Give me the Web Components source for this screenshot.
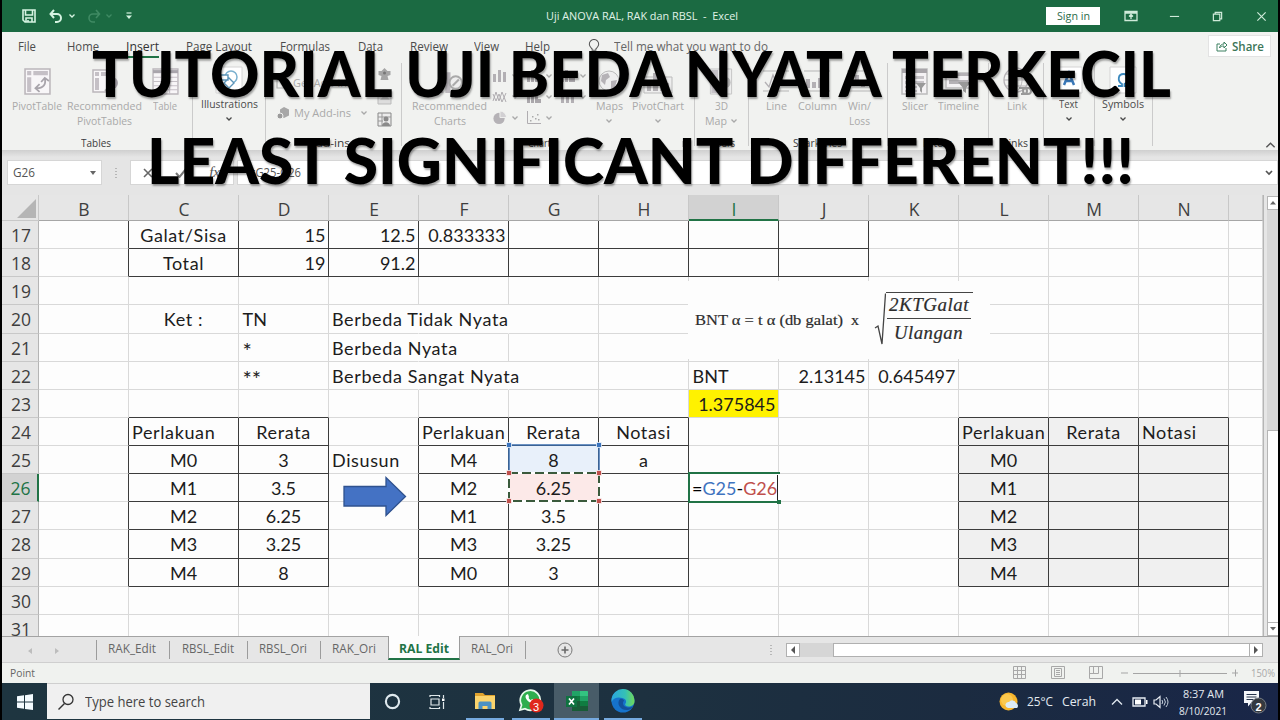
<!DOCTYPE html>
<html lang="id">
<head>
<meta charset="utf-8">
<title>Uji ANOVA RAL, RAK dan RBSL - Excel</title>
<style>
    body{
        margin: 0;
        background: #000;
        font-family: "Open Sans", "Noto Sans", sans-serif;
        overflow: hidden;
    }
</style>
</head>
<body>
<excel-app></excel-app>

<script>
"use strict"

// text squeezed or stretched to the width given in "w"
class FitText extends HTMLElement{
    constructor(){
        super();
        this.attachShadow({mode: "open"});
    }

    connectedCallback(){
        this.shadowRoot.innerHTML = `
        <style>
        :host{ display: inline-block; white-space: nowrap; flex: none; text-align: left; }
        span{ display: inline-block; transform-origin: 0 50%; }
        </style>
        <span><slot></slot></span>`;
        const width = Number(this.getAttribute('w'));
        const span = this.shadowRoot.querySelector('span');
        const real = span.getBoundingClientRect().width;
        this.style.width = width + 'px';
        if(real) span.style.transform = `scaleX(${width / real})`;
    }
}
customElements.define('fit-text', FitText);

const ICONS = {
    save: ['0 0 14 14', `<path d="M1 1h12v12H3l-2-2z M3.5 1v5h7V1 M4 13V9h6v4 M6 11v2" fill="none" stroke="#d5f3e1" stroke-width="1.6"/>`],
    undo: ['0 0 14 14', `<path d="M5 1L1.500 5l3.500 4M2 5h6a4 4 0 0 1 0 8H6" fill="none" stroke="#d5f3e1" stroke-width="2"/>`],
    redo: ['0 0 14 14', `<path d="M9 1l3.500 4L9 9M12 5H6a4 4 0 0 0 0 8h2" fill="none" stroke="#3f8a63" stroke-width="1.600"/>`],
    chev: ['0 0 8 6', `<path d="M1.500 1.500L4 4l2.500-2.500" fill="none" stroke="currentColor" stroke-width="1.300"/>`],
    qat: ['0 0 8 8', `<path d="M1.500 1h5" stroke="#d5f3e1" stroke-width="1.200"/><path d="M1 3.500h6L4 7z" fill="#d5f3e1"/>`],
    ribbonopt: ['0 0 14 12', `<path d="M1 1.500h12v9H1z M1 3h12 M7 9V5 M5 6.500l2-2 2 2" fill="none" stroke="#cfead9" stroke-width="1.300"/>`],
    min: ['0 0 12 12', `<path d="M1 6.500h10" stroke="#cfead9" stroke-width="1.200"/>`],
    restore: ['0 0 12 12', `<path d="M3.500 3.500V1.500h7v7h-2M1.500 3.500h7v7h-7z" fill="none" stroke="#cfead9" stroke-width="1.300"/>`],
    close: ['0 0 12 12', `<path d="M1.500 1.500l9 9M10.500 1.500l-9 9" stroke="#cfead9" stroke-width="1.300"/>`],
    bulb: ['0 0 12 16', `<path d="M4 12V10.500C2.500 9 1 8 1 5.500a5 5 0 0 1 10 0C11 8 9.500 9 8 10.500V12zM4.500 14.500h3" fill="none" stroke="#555" stroke-width="1.100"/>`],
    share: ['0 0 12 12', `<path d="M4 4H1v7h9V8M3.500 8C4 5 6 4 8 4V2l3 3-3 3V6C6 6 4.500 6.500 3.500 8z" fill="none" stroke="#3c8060"/>`],
    pivot: ['0 0 26 26', `<path d="M1 1h24v24H1z" fill="#f8f6f8" stroke="#bbb6bb" stroke-width="1.500"/><path d="M3 3h4v4H3zM9 3h14v4H9zM3 9h4v14H3z" fill="#c5c0c6"/><path d="M20 10c1.500 6-1.500 9.500-8 9.500M16.500 13.500L20 9.500l4 3M15 15.500l-4 4 4 3.500" fill="none" stroke="#a8a4ab" stroke-width="1.700"/>`],
    recpivot: ['0 0 26 26', `<path d="M1 2h20v22H1z" fill="#f8f6f8" stroke="#bbb6bb" stroke-width="1.500"/><path d="M3 4h4v4H3zM9 4h10v4H9zM3 10h4v12H3z" fill="#c5c0c6"/><circle cx="20" cy="15" r="6" fill="#aaa6ad"/><path d="M13 23l4-4" stroke="#aaa" stroke-width="2"/>`],
    table: ['0 0 26 26', `<path d="M1 1h24v24H1z" fill="#f8f6f8" stroke="#bbb6bb" stroke-width="1.300"/><path d="M1 2h24v3H1z" fill="#a9a5ac"/><path d="M1 9h24M1 13h24M1 17h24M1 21h24M9 5v20M17 5v20" stroke="#c5c0c6"/>`],
    illus: ['0 0 28 28', `<path d="M1 1h26v26H1z" fill="#fff" stroke="#d4d4d4"/><circle cx="16" cy="11" r="6" fill="none" stroke="#7ab0cf" stroke-width="1.500"/><path d="M5 9h8v5H5zM14 12l5 5-5 5-5-5z" fill="#fff" stroke="#5b94b8" stroke-width="1.400"/>`],
    getadd: ['0 0 13 13', `<path d="M1 4h11v8H1zM3 4l1-3h5l1 3" fill="none" stroke="#b2b2b2" stroke-width="1.200"/>`],
    myadd: ['0 0 14 14', `<path d="M8 1l5 2.500v6L8 12 4 9.500v-6z" fill="#a7a7a7"/><circle cx="4" cy="10" r="3" fill="#9b9b9b" stroke="#f1f2f0"/>`],
    people: ['0 0 15 15', `<path d="M7.500 1l3 3h3v4l-3 1 1 4h-8l1-4-3-1V4h3z" fill="#a5a5a5"/><circle cx="7.500" cy="6" r="1.500" fill="#777"/>`],
    visio: ['0 0 15 15', `<path d="M1 1h13v13H1z" fill="#ddd" stroke="#bbb"/><path d="M3 10l5-6 5 6z" fill="#bbb"/>`],
    bing: ['0 0 15 15', `<path d="M1 1h13v13H1z" fill="#ececec" stroke="#888"/><path d="M1 5h13M5 1v13M1 9h5" stroke="#999"/><circle cx="9" cy="7" r="2.500" fill="#8a8a8a"/><path d="M5 14c0-5 8-5 8 0z" fill="#8a8a8a"/>`],
    recchart: ['0 0 26 26', `<path d="M2 11h5v13H2zM9 4h5v20H9z" fill="#bdb9be"/><circle cx="19" cy="14" r="6" fill="#eee" stroke="#aaa" stroke-width="2"/><path d="M16 17l6-6" stroke="#aaa" stroke-width="2"/>`],
    bars: ['0 0 15 14', `<path d="M1 5h3v8H1zM6 1h3v12H6zM11 3h3v10h-3z" fill="#b3b0b4"/>`],
    linech: ['0 0 15 14', `<path d="M1 11l3-9 3 9 3-9 4 10M1 4l3 7 3-7 3 8 4-9" fill="none" stroke="#b0adb1"/>`],
    pie: ['0 0 15 15', `<circle cx="7" cy="8" r="6" fill="#b5b2b6"/><path d="M8 7V0a7 7 0 0 1 7 7z" fill="#d2d0d3" stroke="#f1f2f0"/>`],
    hist: ['0 0 15 14', `<path d="M1 13V4h3v9zM5 13V1h3v12zM9 13V6h3v7zM12 13V9h3v4z" fill="#aaa7ab"/>`],
    scatter: ['0 0 15 14', `<path d="M1.500 0v12.500H15" fill="none" stroke="#b0adb1"/><path d="M4 9h1.500v1.500H4zM6 5h1.500v1.500H6zM9 7h1.500v1.500H9zM11 3h1.500v1.500H11zM12 8h1.500v1.500H12z" fill="#aaa"/>`],
    maps: ['0 0 22 24', `<circle cx="11" cy="12" r="10" fill="#eee" stroke="#bbb"/><path d="M4 6l6-2 2 4-4 3-1 5-4-4zM13 12l6-1-2 7-4 2z" fill="#b5b2b6"/>`],
    pivotch: ['0 0 30 26', `<path d="M1 9h28v16H1z" fill="#eee" stroke="#bbb"/><path d="M4 14h4v9H4zM10 5h5v18h-5zM17 11h4v12h-4zM23 15h3v8h-3z" fill="#b3b0b4"/>`],
    map3d: ['0 0 24 28', `<path d="M1 1h22v26H1z" fill="#eee" stroke="#c5c5c5"/><path d="M2 2h7v24H2z" fill="#c6c3c8"/><circle cx="16" cy="15" r="6" fill="#bbb"/>`],
    spline: ['0 0 26 22', `<path d="M0 1h26M0 21h26" stroke="#b5b5b5"/><path d="M2 12l4 5 4-12 4 10 4-7 5 6" fill="none" stroke="#b3b0b4" stroke-width="1.300"/>`],
    scol: ['0 0 26 22', `<path d="M0 1h26M0 21h26" stroke="#b5b5b5"/><path d="M2 9h4v9H2zM8 12h4v6H8zM14 8h4v10h-4zM20 5h4v13h-4z" fill="#b3b0b4"/>`],
    swin: ['0 0 26 22', `<path d="M0 1h26M0 21h26" stroke="#b5b5b5"/><path d="M2 5h4v6H2zM8 5h4v6H8zM14 11h4v6h-4zM20 5h4v6h-4z" fill="#b3b0b4"/>`],
    slicer: ['0 0 27 27', `<path d="M1 1h25v25H1z" fill="#f4f2f4" stroke="#bbb" stroke-width="1.500"/><path d="M1 1h25v4H1z" fill="#a8a5a9"/><path d="M4 8h19v3H4zM4 13h19v3H4zM4 18h12v2H4zM4 22h12v2H4z" fill="#c5c2c6"/><path d="M15 15h10l-4 5v5l-2-2v-3z" fill="#999"/>`],
    timeline: ['0 0 27 27', `<path d="M1 5h25v15H1z" fill="#f4f2f4" stroke="#bbb" stroke-width="1.500"/><path d="M1 5h25v3H1zM4 12h19v4H4z" fill="#b5b2b6"/><path d="M13 14h13l-5 6v5l-3-2v-3z" fill="#999"/>`],
    link: ['0 0 30 28', `<circle cx="14" cy="13" r="12" fill="none" stroke="#b5b2b6" stroke-width="1.300"/><path d="M14 1v24M2 13h24M4 7h20M4 19h20M14 1c-8 6-8 18 0 24M14 1c8 6 8 18 0 24" fill="none" stroke="#b5b2b6"/><path d="M17 21h5a3 3 0 0 1 0 6h-3M27 27h-3a3 3 0 0 1 0-6h2a3 3 0 0 1 0 6" fill="none" stroke="#999" stroke-width="2"/>`],
    text: ['0 0 28 28', `<path d="M1 1h26v26H1z" fill="#fff" stroke="#d4d4d4"/><path d="M9 19l5-12 5 12M11 15h6" fill="none" stroke="#3a78b8" stroke-width="2.500"/>`],
    omega: ['0 0 28 28', `<path d="M1 1h26v26H1z" fill="#fff" stroke="#d4d4d4"/><path d="M9 20h4v-2c-5-3-4-10 1.500-10s6 7 1 10v2h4" fill="none" stroke="#3a88bd" stroke-width="1.800"/>`],
    launch: ['0 0 8 8', `<path d="M1 7V1h6M3 3l4 4M7 4v3H4" fill="none" stroke="#999"/>`],
    up: ['0 0 12 8', `<path d="M1.500 6.500L6 2l4.500 4.500" fill="none" stroke="#555" stroke-width="1.500"/>`],
    down: ['0 0 10 8', `<path d="M2 2l3 3 3-3" fill="none" stroke="#555" stroke-width="1.700"/>`],
    dots: ['0 0 4 12', `<path d="M1.500 1h1v1h-1zM1.500 4h1v1h-1zM1.500 7h1v1h-1zM1.500 10h1v1h-1z" fill="#888"/>`],
    cancel: ['0 0 10 10', `<path d="M1 1l8 8M9 1L1 9" stroke="#666" stroke-width="1.600"/>`],
    check: ['0 0 12 10', `<path d="M1 5l3.500 4L11 1" fill="none" stroke="#777" stroke-width="2"/>`],
    addsheet: ['0 0 16 16', `<circle cx="8" cy="8" r="7" fill="none" stroke="#7a7a7a"/><path d="M8 4.500v7M4.500 8h7" stroke="#6a6a6a" stroke-width="1.600"/>`],
    normal: ['0 0 13 13', `<path d="M.5.500h12v12H.5zM4.500.500v12M8.500.500v12M.5 4.500h12M.5 8.500h12" fill="none" stroke="#a8a8a8"/>`],
    page: ['0 0 14 13', `<path d="M.5.500h13v12H.5zM3.500 2.500h7v8h-7zM5 4.500h4M5 6.500h4M5 8.500h4" fill="none" stroke="#a8a8a8"/>`],
    brk: ['0 0 14 13', `<path d="M.5.500h13v12H.5zM4.500.500v7M9.500.500v7M.5 7.500h9" fill="none" stroke="#a8a8a8"/>`],
    win: ['0 0 16 16', `<path d="M0 2.300L7 1.300v6.300H0zM8 1.200L16 0v7.600H8zM0 8.500h7v6.300l-7-1zM8 8.500h8V16l-8-1.100z" fill="#f4fbff"/>`],
    search: ['0 0 18 18', `<circle cx="11" cy="6.500" r="5" fill="none" stroke="#333" stroke-width="1.300"/><path d="M7.500 10.500L1.500 16.500" stroke="#333" stroke-width="1.500"/>`],
    cortana: ['0 0 16 16', `<circle cx="8" cy="8" r="6.200" fill="none" stroke="#dfe9ee" stroke-width="2"/>`],
    taskview: ['0 0 16 16', `<path d="M1 1.500h9.500M1 14.500h9.500M2 5h8v6H2zM1 1v2M10.500 1v2M1 13v2M10.500 13v2M14.500 1v3M14.500 8v7" fill="none" stroke="#dfe7ea" stroke-width="1.200"/><path d="M13 4.500h2.500v2.500H13z" fill="#fff"/>`],
    folder: ['0 0 22 18', `<path d="M1 1h8l2 2h10v4H1z" fill="#e0a32e"/><path d="M1 4h20v13H1z" fill="#fbd46c"/><path d="M4.500 17v-6q0-1.500 1.500-1.500h10q1.500 0 1.500 1.500v6h-4v-3h-5v3z" fill="#4a91c4"/>`],
    whats: ['0 0 26 24', `<path d="M2 21l1.500-5A10 10 0 1 1 7 19.700z" fill="#2fae4e" stroke="#eafaee" stroke-width="1.700"/><path d="M8 6c-2 3 3 9 8 8l1-2-3-2-1 1c-1 0-3-2-2-3L10 5z" fill="#fff"/><circle cx="18.500" cy="16.500" r="7" fill="#e0281c"/>`],
    excel: ['0 0 22 20', `<path d="M6 0h15q1 0 1 1v18q0 1-1 1H6z" fill="#21a366"/><path d="M6 5h8v5H6z" fill="#107c41"/><path d="M14 0h7q1 0 1 1v4h-8z" fill="#33c481"/><path d="M6 10h8v5H6zM14 10h8v5h-8zM6 15h16v5H6z" fill="#185c37"/><path d="M14 10h8v5h-8z" fill="#107c41"/><path d="M0 5h11v11H0z" fill="#0f7240"/><path d="M3 7.500l5 6M8 7.500l-5 6" stroke="#fff" stroke-width="1.700"/>`],
    edge: ['0 0 24 24', `<defs><linearGradient id="a" x1="0" x2="1"><stop offset="0" stop-color="#2aa6e0"/><stop offset=".6" stop-color="#35c1b5"/><stop offset="1" stop-color="#72d957"/></linearGradient></defs><circle cx="12" cy="12" r="11.500" fill="#1673cc"/><path d="M.5 11A11.500 11.500 0 0 1 23.500 12c0 4-3 5.500-6 5.500s-4-1.500-3-3 1-4.500-3-5.500S3 8 .5 13z" fill="url(#a)"/><path d="M9 10c-4 4 0 12 8 11 2-.5 4-2 5-3.500-4 2-10 1-10-3.500 0-1.500 1-2 1-2.500S11 9 9 10z" fill="#12509c"/>`],
    weather: ['0 0 20 20', `<circle cx="9.500" cy="9.500" r="9" fill="#f8b62d"/><circle cx="8" cy="8" r="6" fill="#fcc94e"/><path d="M9 16a3 3 0 0 1 1-6 4 4 0 0 1 7 1 3 3 0 0 1 1 5z" fill="#dcebf6"/>`],
    tray: ['0 0 12 8', `<path d="M1 6.500L6 1.500l5 5" fill="none" stroke="#dfe6ee" stroke-width="1.400"/>`],
    battery: ['0 0 16 10', `<path d="M1 1h12v8H1z" fill="none" stroke="#e6ebf2" stroke-width="1.300"/><path d="M3 2.500h6v5H3zM14 3h1.500v4H14z" fill="#fff"/>`],
    sound: ['0 0 16 14', `<path d="M1 5h2l4-3.500v11L3 9H1z" fill="none" stroke="#e6ebf2" stroke-width="1.200"/><path d="M9 5q1.500 2 0 4M11 3.500q2.800 3.500 0 7M13 2q4 5 0 10" fill="none" stroke="#c5cfdb"/>`],
    notif: ['0 0 24 24', `<path d="M1 1h15v12H8l-3 3.500V13H1z" fill="#f5f7fa"/><path d="M3.500 4.500h10M3.500 7h10M3.500 9.500h7" stroke="#26344c"/><circle cx="15.500" cy="15.500" r="7.500" fill="#34393f" stroke="#777d86"/>`]
};

function icon(name, w, h, style = ''){
    const [box, body] = ICONS[name];
    return `<svg class="i" viewBox="${box}" width="${w}" height="${h}" style="${style}">${body}</svg>`;
}

function fit(text, w, cls = ''){
    return `<fit-text w="${w}" class="${cls}">${text}</fit-text>`;
}

class TitleBar extends HTMLElement{
    constructor(){
        super();
        this.attachShadow({mode: "open"});
    }

    connectedCallback(){
        this.shadowRoot.innerHTML = `${this.render()} ${this.styles()}`
    }

    render(){
        return `
        <div class="quick">
            ${icon('save', 14, 14)}
            ${icon('undo', 14, 14, 'margin-left:13px')}
            ${icon('chev', 8, 6, 'margin-left:5px;color:#d5f3e1')}
            ${icon('redo', 14, 14, 'margin-left:11px')}
            ${icon('chev', 8, 6, 'margin-left:4px;color:#3f8a63')}
            ${icon('qat', 8, 8, 'margin-left:12px')}
        </div>
        <div class="name">${fit('Uji ANOVA RAL, RAK dan RBSL &nbsp;-&nbsp; Excel', 192)}</div>
        <div class="sign">${fit('Sign in', 33)}</div>
        ${icon('ribbonopt', 14, 12, 'margin-left:24px')}
        ${icon('min', 11, 12, 'margin-left:31px')}
        ${icon('restore', 11, 11, 'margin-left:32px')}
        ${icon('close', 11, 11, 'margin-left:33px')}
        `
    }

    styles(){
        return `
        <style>
        :host{
            display: flex;
            align-items: center;
            height: 32px;
            background: #1b6a42;
            color: #e0f3e8;
            font-size: 11px;
        }
        .i{ flex: none; }
        .quick{ display: flex; align-items: center; width: 524px; padding-left: 20px; }
        .name{ width: 500px; margin-top: -2px; }
        .sign{
            width: 54px;
            height: 18px;
            line-height: 18px;
            text-align: center;
            background: #fff;
            color: #2c6b4a;
        }
        </style>
        `
    }
}
customElements.define('title-bar', TitleBar);

class RibbonTabs extends HTMLElement{
    constructor(){
        super();
        this.attachShadow({mode: "open"});
    }

    connectedCallback(){
        this.shadowRoot.innerHTML = `${this.render()} ${this.styles()}`
    }

    render(){
        // text, gap before, width
        const tabs = [
            ['File', 16, 18], ['Home', 31, 32], ['Insert', 27, 33], ['Page Layout', 27, 66],
            ['Formulas', 28, 50], ['Data', 28, 25], ['Review', 27, 38], ['View', 26, 25], ['Help', 26, 25]
        ];
        return `
        ${tabs.map(([t, gap, w]) => `<div class="tab ${t === 'Insert' ? 'on' : ''}" style="margin-left:${gap}px">${fit(t, w)}</div>`).join('')}
        ${icon('bulb', 12, 15, 'margin:7px 0 0 38px')}
        <div class="tab tell">${fit('Tell me what you want to do', 154)}</div>
        <div class="share">${icon('share', 12, 12)}${fit('Share', 32)}</div>
        `
    }

    styles(){
        return `
        <style>
        :host{
            display: flex;
            height: 30px;
            font-size: 12px;
            color: #4c4c4c;
        }
        .tab{ height: 24px; line-height: 30px; }
        .tab.on{ border-bottom: 2px solid #217346; color: #333; }
        .tell{ margin-left: 14px; color: #666; }
        .share{
            display: flex;
            align-items: center;
            justify-content: center;
            gap: 4px;
            width: 61px;
            height: 20px;
            margin: 3px 7px 0 auto;
            background: #fff;
            border: 1px solid #e3e3e3;
            color: #3c7558;
            font-weight: 600;
        }
        </style>
        `
    }
}
customElements.define('ribbon-tabs', RibbonTabs);

class RibbonGroup extends HTMLElement{
    constructor(){
        super();
        this.attachShadow({mode: "open"});
    }

    connectedCallback(){
        this.style.width = this.getAttribute('width') + 'px';
        this.shadowRoot.innerHTML = `${this.render()} ${this.styles()}`
    }

    render(){
        const label = this.getAttribute('label');
        return `
        <div class="body"><slot></slot></div>
        <div class="label" style="padding-left:${this.getAttribute('left') || 0}px">
            ${label ? fit(label, this.getAttribute('lw')) : ''}
            ${this.hasAttribute('launcher') ? icon('launch', 8, 8, 'margin:5px 4px 0 auto') : ''}
        </div>
        `
    }

    styles(){
        return `
        <style>
        :host{
            display: flex;
            flex-direction: column;
            box-sizing: border-box;
            height: 83px;
            border-right: 1px solid #cbcbcb;
            flex: none;
        }
        .body{ display: flex; flex: none; height: 72px; align-items: flex-start; }
        .label{ display: flex; flex: none; height: 16px; line-height: 16px; font-size: 10.500px; color: #3c3c3c; }
        </style>
        `
    }
}
customElements.define('ribbon-group', RibbonGroup);

class RibbonBar extends HTMLElement{
    constructor(){
        super();
        this.attachShadow({mode: "open"});
    }

    connectedCallback(){
        this.shadowRoot.innerHTML = `${this.render()} ${this.styles()}`
    }

    // big button: icon on top, one or two lines of label
    big(width, name, iw, ih, lines, cls = ''){
        return `
        <div class="big ${cls}" style="width:${width}px">
            <div class="pic">${icon(name, iw, ih)}</div>
            ${lines.map(l => `<div class="line">${l === 'v' ? icon('chev', 8, 6) : fit(l[0], l[1]) + (l[2] ? icon('chev', 8, 6, 'margin-left:3px') : '')}</div>`).join('')}
        </div>`
    }

    mini(names, gap){
        return `
        <div class="mini" style="margin-left:${gap}px">
            ${names.map(n => `<div>${icon(n, 15, 14)}${icon('chev', 8, 6, 'margin-left:4px')}</div>`).join('')}
        </div>`
    }

    render(){
        return `
        <ribbon-group width="191" label="Tables" lw="30" left="79">
            <div style="width:5px"></div>
            ${this.big(60, 'pivot', 27, 27, [['PivotTable', 50]])}
            ${this.big(75, 'recpivot', 26, 26, [['Recommended', 75], ['PivotTables', 55]])}
            ${this.big(46, 'table', 27, 27, [['Table', 24]])}
        </ribbon-group>
        <ribbon-group width="73">
            ${this.big(72, 'illus', 28, 28, [['Illustrations', 57], 'v'], 'dark')}
        </ribbon-group>
        <ribbon-group width="136" label="Add-ins" lw="42" left="42">
            <div class="adds">
                <div>${icon('getadd', 13, 13)}${fit('Get Add-ins', 59)}</div>
                <div>${icon('myadd', 14, 14)}${fit('My Add-ins', 57)}${icon('chev', 8, 6, 'margin-left:5px')}</div>
            </div>
            <div class="stack">${icon('people', 15, 15)}${icon('visio', 15, 15)}${icon('bing', 15, 15)}</div>
        </ribbon-group>
        <ribbon-group width="293" label="Charts" lw="27" left="126" launcher>
            <div style="width:8px"></div>
            ${this.big(79, 'recchart', 27, 27, [['Recommended', 75], ['Charts', 32]])}
            ${this.mini(['bars', 'linech', 'pie'], 3)}
            ${this.mini(['hist', 'hist', 'scatter'], 7)}
            ${this.mini(['hist', 'bars'], 7)}
            ${this.big(44, 'maps', 22, 24, [['Maps', 27], 'v'])}
            ${this.big(54, 'pivotch', 30, 26, [['PivotChart', 52], 'v'])}
        </ribbon-group>
        <ribbon-group width="54" label="Tours" lw="24" left="16">
            ${this.big(52, 'map3d', 24, 27, [['3D', 13], ['Map', 22, true]])}
        </ribbon-group>
        <ribbon-group width="139" label="Sparklines" lw="49" left="44">
            <div style="width:8px"></div>
            ${this.big(38, 'spline', 26, 22, [['Line', 21]])}
            ${this.big(44, 'scol', 26, 22, [['Column', 39]])}
            ${this.big(41, 'swin', 26, 22, [['Win/', 23], ['Loss', 21]])}
        </ribbon-group>
        <ribbon-group width="101" label="Filters" lw="29" left="35">
            <div style="width:8px"></div>
            ${this.big(37, 'slicer', 27, 27, [['Slicer', 26]])}
            ${this.big(50, 'timeline', 27, 27, [['Timeline', 41]])}
        </ribbon-group>
        <ribbon-group width="55" label="Links" lw="25" left="14">
            ${this.big(56, 'link', 30, 28, [['Link', 20]])}
        </ribbon-group>
        <ribbon-group width="51">
            ${this.big(49, 'text', 28, 28, [['Text', 19], 'v'], 'dark')}
        </ribbon-group>
        <ribbon-group width="58">
            ${this.big(56, 'omega', 28, 28, [['Symbols', 42], 'v'], 'dark')}
        </ribbon-group>
        ${icon('up', 11, 8, 'margin:78px 2px 0 auto')}
        `
    }

    styles(){
        return `
        <style>
        :host{
            display: flex;
            height: 88px;
            padding-top: 1px;
            font-size: 11.500px;
            color: #a9a9a9;
        }
        .big{ display: flex; flex-direction: column; align-items: center; flex: none; }
        .pic{ display: flex; align-items: center; justify-content: center; height: 34px; margin-top: 1px; }
        .line{ display: flex; align-items: center; justify-content: center; height: 15px; line-height: 15px; }
        .dark{ color: #4a4a4a; }
        .dark .pic{ height: 32px; }
        .mini{ width: 27px; flex: none; padding-top: 2px; }
        .mini>div{ display: flex; align-items: center; height: 21px; }
        .adds{ width: 111px; padding-left: 10px; box-sizing: border-box; }
        .adds>div{ display: flex; align-items: center; gap: 4px; height: 21px; }
        .adds>div:first-child{ height: 39px; }
        .stack{ display: flex; flex-direction: column; gap: 7.500px; padding-top: 4px; }
        </style>
        `
    }
}
customElements.define('ribbon-bar', RibbonBar);

class FormulaBar extends HTMLElement{
    constructor(){
        super();
        this.attachShadow({mode: "open"});
    }

    connectedCallback(){
        this.shadowRoot.innerHTML = `${this.render()} ${this.styles()}`
    }

    render(){
        return `
        <div class="box ref">${fit('G26', 22)}<i></i></div>
        ${icon('dots', 4, 12, 'margin:0 12px')}
        <div class="box tools">${icon('cancel', 10, 10)}${icon('check', 12, 10)}<em>fx</em></div>
        <div class="box input">${fit('=G25-G26', 52)}${icon('down', 10, 8, 'margin-left:auto')}</div>
        `
    }

    styles(){
        return `
        <style>
        :host{
            display: flex;
            align-items: flex-start;
            box-sizing: border-box;
            height: 45px;
            padding: 10px 0 0 5px;
            background: linear-gradient(#cfcfcf, #e5e5e5 7px);
            font-size: 12px;
            color: #555;
        }
        .box{
            display: flex;
            align-items: center;
            box-sizing: border-box;
            height: 25px;
            background: #fff;
            border: 1px solid #d6d6d6;
        }
        svg{ flex: none; }
        :host>svg{ margin-top: 7px !important; }
        .ref{ width: 95px; padding: 0 5px; justify-content: space-between; }
        .ref i{ border: 3.500px solid transparent; border-top: 4px solid #666; border-bottom: 0; }
        .tools{ width: 104px; padding: 0 13px 0 12px; justify-content: space-between; }
        em{ font: italic 15px "Liberation Serif", serif; }
        .input{ flex: 1; margin-left: 3px; padding: 0 3px 0 11px; }
        </style>
        `
    }
}
customElements.define('formula-bar', FormulaBar);

const COLS = ['B', 'C', 'D', 'E', 'F', 'G', 'H', 'I', 'J', 'K', 'L', 'M', 'N', 'O'];
const FIRST = 17, LAST = 31;

// ref: [text, alignment]
const CELLS = {
    C17: ['Galat/Sisa', 'c'], D17: ['15', 'r'], E17: ['12.5', 'r'], F17: ['0.833333', 'r'],
    C18: ['Total', 'c'], D18: ['19', 'r'], E18: ['91.2', 'r'],
    C20: ['Ket :', 'c'], D20: ['TN', 'l'], E20: ['Berbeda Tidak Nyata', 'l'],
    D21: ['*', 'l star'], E21: ['Berbeda Nyata', 'l'],
    D22: ['**', 'l star'], E22: ['Berbeda Sangat Nyata', 'l'],
    I22: ['BNT', 'l'], J22: ['2.13145', 'r'], K22: ['0.645497', 'r'],
    I23: ['1.375845', 'r'],
    C24: ['Perlakuan', 'l'], D24: ['Rerata', 'c'],
    C25: ['M0', 'c'], D25: ['3', 'c'], E25: ['Disusun', 'l'],
    C26: ['M1', 'c'], D26: ['3.5', 'c'],
    C27: ['M2', 'c'], D27: ['6.25', 'c'],
    C28: ['M3', 'c'], D28: ['3.25', 'c'],
    C29: ['M4', 'c'], D29: ['8', 'c'],
    F24: ['Perlakuan', 'l'], G24: ['Rerata', 'c'], H24: ['Notasi', 'c'],
    F25: ['M4', 'c'], G25: ['8', 'c'], H25: ['a', 'c'],
    F26: ['M2', 'c'], G26: ['6.25', 'c'],
    F27: ['M1', 'c'], G27: ['3.5', 'c'],
    F28: ['M3', 'c'], G28: ['3.25', 'c'],
    F29: ['M0', 'c'], G29: ['3', 'c'],
    L24: ['Perlakuan', 'l'], M24: ['Rerata', 'c'], N24: ['Notasi', 'l'],
    L25: ['M0', 'c'], L26: ['M1', 'c'], L27: ['M2', 'c'], L28: ['M3', 'c'], L29: ['M4', 'c']
};

// bordered ranges: first column, last column, first row, last row
const BOXES = [['C', 'J', 17, 18], ['C', 'D', 24, 29], ['F', 'H', 24, 29], ['L', 'N', 24, 29]];
const FILL = {I23: '#fff200', G25: '#e8f0fa', G26: '#fce9e8'};
const SPILL = ['E20', 'F20', 'E21', 'E22', 'F22'];

class SheetGrid extends HTMLElement{
    constructor(){
        super();
        this.attachShadow({mode: "open"});
    }

    connectedCallback(){
        this.shadowRoot.innerHTML = `${this.render()} ${this.styles()}`
    }

    boxAt(c, r){
        return BOXES.findIndex(([a, b, top, bottom]) => COLS[c] >= a && COLS[c] <= b && r >= top && r <= bottom);
    }

    cells(){
        let out = '';
        for(let r = FIRST; r <= LAST; r++){
            COLS.forEach((col, c) => {
                const ref = col + r;
                const box = this.boxAt(c, r);
                const right = box >= 0 || this.boxAt(c + 1, r) >= 0;
                const bottom = box >= 0 || this.boxAt(c, r + 1) >= 0;
                const [text, align] = CELLS[ref] || ['', 'l'];
                let css = `grid-area:${r - FIRST + 2}/${c + 2};`;
                if(right) css += 'border-right-color:#3c3c3c;';
                if(bottom) css += 'border-bottom-color:#3c3c3c;';
                if(SPILL.includes(ref)) css += 'border-right-color:transparent;';
                if(FILL[ref]) css += `background:${FILL[ref]};`;
                if(box === 3) css += 'background:#f0f0f0;';
                const word = /[a-z]{2}/.test(text) ? 'word' : '';
                out += `<div class="cell ${align} ${word}" style="${css}">${text}</div>`;
            });
        }
        return out;
    }

    render(){
        let rows = '';
        for(let r = FIRST; r <= LAST; r++)
            rows += `<div class="row ${r === 26 ? 'on' : ''}" style="grid-area:${r - FIRST + 2}/1">${r}</div>`;
        return `
        <div class="corner"><svg width="37" height="26"><path d="M34 4v19H15z" fill="#b5b5b5"/></svg></div>
        ${COLS.map((c, i) => `<div class="col ${c === 'I' ? 'on' : ''}" style="grid-area:1/${i + 2}">${c === 'O' ? '' : c}</div>`).join('')}
        ${rows}
        ${this.cells()}
        <svg class="arrow" width="66" height="42" viewBox="0 0 66 42"><path d="M2 11.500h42V2.500L63.500 21.500 44 40.500V31H2z" fill="#4472c4" stroke="#2f528f" stroke-width="1.300"/></svg>
        <svg class="range" style="grid-area:10/7" width="96" height="35" viewBox="0 0 96 35">
            <path d="M3 3h90v28H3z" fill="none" stroke="#3b6fb0" stroke-width="1.500"/>
            <path d="M.5.500h5v5h-5zM90.500.500h5v5h-5z" fill="#3b74bd" stroke="#fff" stroke-width=".7"/>
        </svg>
        <svg class="range" style="grid-area:11/7" width="96" height="35" viewBox="0 0 96 35">
            <path d="M3 3h90v28H3z" fill="none" stroke="#fff" stroke-width="2"/>
            <path d="M3 3h90v28H3z" fill="none" stroke="#3a5a3c" stroke-width="2" stroke-dasharray="9 4"/>
            <path d="M.5.500h5v5h-5zM90.500.500h5v5h-5zM.5 28.500h5v5h-5zM90.500 28.500h5v5h-5z" fill="#c0504d" stroke="#fff" stroke-width=".7"/>
        </svg>
        <div class="edit"><span>=<b>G25</b>-<u>G26</u></span><i></i></div>
        <formula-picture></formula-picture>
        `
    }

    styles(){
        return `
        <style>
        :host{
            display: grid;
            grid-template-columns: 37px 90px 110px repeat(11, 90px) 34px;
            grid-template-rows: 26px repeat(15, 28.140px);
            width: 1261px;
            height: 441px;
            overflow: hidden;
            background: #fdfdfd;
            flex: none;
        }
        .corner, .col, .row{
            box-sizing: border-box;
            background: #e6e6e6;
            border-right: 1px solid #c8c8c8;
            border-bottom: 1px solid #c8c8c8;
            color: #3e3e3e;
            font-size: 17.500px;
            text-align: center;
        }
        .col{ line-height: 28px; padding-left: 1px; border-bottom-color: #a6a6a6; }
        .row{ line-height: 29px; padding-left: 2px; border-right-color: #b5b5b5; }
        .col.on{ background: #d2d2d2; color: #217346; border-bottom: 2px solid #217346; }
        .row.on{ background: #d2d2d2; color: #217346; border-right: 2px solid #217346; }
        .cell{
            box-sizing: border-box;
            min-width: 0;
            padding: 0 2.500px 0 4px;
            border-right: 1px solid #d9d9d9;
            border-bottom: 1px solid #d9d9d9;
            font: 18px/29px Lato, sans-serif;
            color: #1c1c1c;
            white-space: nowrap;
        }
        .l{ padding-left: 3.500px; }
        .c{ text-align: center; padding: 0; }
        .r{ text-align: right; }
        .word{ letter-spacing: .62px; }
        .l.word{ padding-left: 3px; }
        .star{ font-size: 22px; line-height: 33px; }
        .arrow{ grid-area: 11/5; margin: 1px 0 0 13px; z-index: 2; }
        .range{ margin: -4px 0 0 -3.500px; z-index: 2; }
        .edit{
            grid-area: 11/9;
            position: relative;
            z-index: 2;
            box-sizing: border-box;
            width: 92px;
            height: 31px;
            margin: -2px 0 0 -1px;
            padding-left: 2px;
            border: 2px solid #217346;
            border-right: 0;
            background: #fff;
            font: 18px/29px Lato, sans-serif;
            white-space: nowrap;
        }
        .edit b{ font-weight: 400; color: #3f74c0; }
        .edit u{ text-decoration: none; color: #c0504d; }
        .edit i{ position: absolute; right: 2px; top: 1px; width: 1px; height: 25px; background: #222; }
        .edit::after{ content: ""; position: absolute; right: -1px; bottom: -3px; width: 4px; height: 4px; background: #217346; }
        formula-picture{ grid-area: 4/9; z-index: 1; margin: 4px 0 0 -1px; }
        </style>
        `
    }
}

// picture of the BNT formula that lies over the cells
class FormulaPicture extends HTMLElement{
    constructor(){
        super();
        this.attachShadow({mode: "open"});
    }

    connectedCallback(){
        this.shadowRoot.innerHTML = `${this.render()} ${this.styles()}`
    }

    render(){
        return `
        ${fit('BNT α = t α (db galat)', 148)}
        ${fit('x', 8, 'times')}
        <svg width="12" height="54"><path d="M1 36l3-2 4 18L11.500 1.500" fill="none" stroke="#444" stroke-width="1.300"/></svg>
        <div class="frac">
            <div class="num">${fit('2KTGalat', 80)}</div>
            <div class="den">${fit('Ulangan', 69)}</div>
        </div>
        `
    }

    styles(){
        return `
        <style>
        :host{
            display: flex;
            box-sizing: border-box;
            width: 302px;
            height: 78px;
            padding: 11px 0 0 7px;
            background: #fdfdfd;
            color: #2c2c2c;
            font: 15.500px/56px "Liberation Serif", serif;
            -webkit-text-stroke: .2px #2c2c2c;
        }
        .times{ margin: 0 15px 0 8px; }
        svg{ flex: none; }
        .frac{ width: 87px; border-top: 1.500px solid #444; height: 52px; font-size: 18.500px; font-style: italic; letter-spacing: .5px; }
        .num{ box-sizing: border-box; height: 26px; line-height: 25px; margin: 0 2px 0 1px; padding-left: 2px; border-bottom: 1.500px solid #444; }
        .den{ padding-left: 8px; line-height: 29px; height: 26px; }
        </style>
        `
    }
}
customElements.define('formula-picture', FormulaPicture);
customElements.define('sheet-grid', SheetGrid);

class SideScroll extends HTMLElement{
    constructor(){
        super();
        this.attachShadow({mode: "open"});
    }

    connectedCallback(){
        this.shadowRoot.innerHTML = `
        <div class="btn"><svg width="8" height="6"><path d="M1 4.500h6L4 1z" fill="#666"/></svg></div>
        <div class="track"></div>
        <div class="thumb"></div>
        <div class="btn"><svg width="8" height="6"><path d="M1 1h6L4 4.500z" fill="#666"/></svg></div>
        <style>
        :host{
            display: flex;
            flex-direction: column;
            flex: 1;
            height: 441px;
            box-sizing: border-box;
            padding: 1px 0 0 3px;
            background: #e6e6e6;
            border-left: 1px solid #b5b5b5;
        }
        .btn{ display: flex; align-items: center; justify-content: center; height: 12px; background: #fff; border: 1px solid #b5b5b5; border-right: 0; }
        .track{ height: 220px; background: #d8d8d8; }
        .thumb{ flex: 1; background: #fdfdfd; border: 1px solid #b5b5b5; border-width: 1px 0 0 1px; }
        </style>`
    }
}
customElements.define('side-scroll', SideScroll);

class SheetTabs extends HTMLElement{
    constructor(){
        super();
        this.attachShadow({mode: "open"});
    }

    connectedCallback(){
        this.shadowRoot.innerHTML = `${this.render()} ${this.styles()}`
    }

    render(){
        // name, tab width, text width
        const tabs = [['RAK_Edit', 73, 48], ['RBSL_Edit', 78, 52], ['RBSL_Ori', 73, 48], ['RAK_Ori', 68, 44], ['RAL Edit', 72, 50], ['RAL_Ori', 66, 42]];
        return `
        <div class="nav"><svg width="36" height="8"><path d="M6 1v6L2 4zM29 1v6l4-3z" fill="#bdbdbd"/></svg></div>
        ${tabs.map(([t, w, tw]) => `<div class="tab ${t === 'RAL Edit' ? 'on' : ''}" style="width:${w}px">${fit(t, tw)}</div>`).join('')}
        ${icon('addsheet', 16, 16, 'margin:5px 0 0 31px')}
        ${icon('dots', 4, 12, 'margin:7px 0 0 196px')}
        <div class="scroll">
            <div class="btn"><svg width="6" height="8"><path d="M5 0v8L1 4z" fill="#555"/></svg></div>
            <div class="gap"></div>
            <div class="thumb"></div>
            <div class="btn"><svg width="6" height="8"><path d="M1 0v8l4-4z" fill="#555"/></svg></div>
        </div>
        `
    }

    styles(){
        return `
        <style>
        :host{
            display: flex;
            box-sizing: border-box;
            height: 27px;
            border-top: 1px solid #a3a3a3;
            border-bottom: 1px solid #cfcfcf;
            background: #e6e6e6;
            font-size: 12px;
            color: #666;
        }
        .nav{ box-sizing: border-box; width: 95px; height: 20px; margin-top: 3px; padding: 2px 0 0 24px; border-right: 1px solid #9c9c9c; }
        .tab{
            box-sizing: border-box;
            height: 18px;
            margin-top: 4px;
            padding-right: 2px;
            line-height: 15px;
            text-align: center;
            border-right: 1px solid #9c9c9c;
        }
        .tab.on{
            height: 24px;
            margin: -1px 0 0 -1px;
            padding: 0;
            line-height: 25px;
            background: #fdfdfd;
            color: #217346;
            font-weight: 700;
            border-bottom: 2px solid #217346;
            border-left: 1px solid #9c9c9c;
        }
        .scroll{ display: flex; width: 477px; height: 14px; margin: 6px 0 0 13px; }
        .btn, .thumb{ box-sizing: border-box; border: 1px solid #b0b0b0; background: #fff; }
        .btn{ display: flex; align-items: center; justify-content: center; width: 14px; }
        .gap{ width: 33px; background: #d6d6d6; }
        .thumb{ flex: 1; border-right: 0; }
        </style>
        `
    }
}
customElements.define('sheet-tabs', SheetTabs);

class StatusBar extends HTMLElement{
    constructor(){
        super();
        this.attachShadow({mode: "open"});
    }

    connectedCallback(){
        this.shadowRoot.innerHTML = `
        ${fit('Point', 25)}
        ${icon('normal', 13, 13, 'margin-left:auto')}
        ${icon('page', 14, 13, 'margin-left:25px')}
        ${icon('brk', 14, 13, 'margin-left:24px')}
        <svg width="118" height="12" style="margin:0 13px 0 17px"><path d="M1 6h7M13 6.500h94M60 3v7M112 6h7M115.500 2.500v7" stroke="#a5a5a5"/></svg>
        ${fit('150%', 24, 'zoom')}
        <style>
        :host{
            display: flex;
            align-items: center;
            box-sizing: border-box;
            height: 20px;
            padding: 0 3px 1px 8px;
            background: #f0f2ef;
            font-size: 11px;
            color: #666;
        }
        .zoom{ color: #a8a8a8; }
        </style>`
    }
}
customElements.define('status-bar', StatusBar);

class TaskBar extends HTMLElement{
    constructor(){
        super();
        this.attachShadow({mode: "open"});
    }

    connectedCallback(){
        this.shadowRoot.innerHTML = `${this.render()} ${this.styles()}`
    }

    render(){
        return `
        <div class="start">${icon('win', 16, 16)}</div>
        <div class="search">${icon('search', 18, 18)}${fit('Type here to search', 120)}</div>
        <div class="app" style="width:44px">${icon('cortana', 17, 17)}</div>
        <div class="app" style="width:45px">${icon('taskview', 16, 16)}</div>
        <div class="app run" style="width:38px;margin-left:7px">${icon('folder', 22, 18)}</div>
        <div class="app run" style="width:38px;margin-left:8px">${icon('whats', 26, 24)}<span class="n red">3</span></div>
        <div class="app run active" style="width:45px;margin-left:4px">${icon('excel', 22, 20)}</div>
        <div class="app run" style="width:38px;margin-left:5px">${icon('edge', 24, 24)}</div>
        <div class="tray">
            ${icon('weather', 20, 20)}
            ${fit('25°C', 26, 't1')}
            ${fit('Cerah', 34, 't2')}
            ${icon('tray', 12, 8, 'margin-left:15px')}
            ${icon('battery', 16, 10, 'margin-left:9px')}
            ${icon('sound', 16, 14, 'margin-left:5px')}
            <div class="clock"><div>${fit('8:37 AM', 41)}</div><div>${fit('8/10/2021', 48)}</div></div>
            <div class="note">${icon('notif', 24, 24)}<span class="n">2</span></div>
        </div>
        `
    }

    styles(){
        return `
        <style>
        :host{
            display: flex;
            height: 37px;
            background: linear-gradient(90deg, #1e3540, #1d3140 50%, #1b2b40 75%, #192648);
            color: #e4eaf0;
            font-size: 12.500px;
        }
        .start{ display: flex; align-items: center; justify-content: center; width: 45px; }
        .search{
            display: flex;
            align-items: center;
            gap: 10px;
            box-sizing: border-box;
            width: 323px;
            height: 36px;
            padding-left: 10px;
            background: #f0f0f0;
            border-top: 1px solid #cfcfcf;
            color: #444;
            font-size: 14px;
        }
        .app{ display: flex; position: relative; align-items: center; justify-content: center; box-sizing: border-box; }
        .run{ border-bottom: 2px solid #76aadf; }
        .active{ background: #485c68; }
        .n{ position: absolute; color: #fff; font: 11px/12px "Liberation Sans", sans-serif; }
        .red{ left: 21px; top: 18px; }
        .note .n{ left: 12.500px; top: 11.500px; font-weight: 700; }
        .note{ position: relative; margin-left: 15px; height: 24px; padding-top: 1px; }
        .tray{ display: flex; align-items: center; margin-left: auto; padding-right: 11px; }
        .t1{ margin-left: 8px; }
        .t2{ margin-left: 9px; }
        .clock{ width: 50px; margin-left: 9px; font-size: 11.500px; line-height: 17px; text-align: center; }
        </style>
        `
    }
}
customElements.define('task-bar', TaskBar);

// caption drawn over the whole window
class VideoCaption extends HTMLElement{
    constructor(){
        super();
        this.attachShadow({mode: "open"});
    }

    connectedCallback(){
        this.shadowRoot.innerHTML = `
        <div style="padding-left:92px">${fit('TUTORIAL UJI BEDA NYATA TERKECIL', 1079)}</div>
        <div style="padding-left:147px">${fit('LEAST SIGNIFICANT DIFFERENT!!!', 987)}</div>
        <style>
        :host{
            display: block;
            position: absolute;
            left: 0;
            top: 29px;
            width: 1280px;
            z-index: 5;
            color: #000;
            font: 900 63px/87px Lato, sans-serif;
            text-shadow: 1px 2px 2px rgba(0, 0, 0, .35);
        }
        </style>`
    }
}
customElements.define('video-caption', VideoCaption);

class ExcelApp extends HTMLElement{
    constructor(){
        super();
        this.attachShadow({mode: "open"});
    }

    connectedCallback(){
        this.shadowRoot.innerHTML = `
        <title-bar></title-bar>
        <div class="ribbon">
            <ribbon-tabs></ribbon-tabs>
            <ribbon-bar></ribbon-bar>
        </div>
        <formula-bar></formula-bar>
        <div class="sheet"><sheet-grid></sheet-grid><side-scroll></side-scroll></div>
        <sheet-tabs></sheet-tabs>
        <status-bar></status-bar>
        <task-bar></task-bar>
        <video-caption></video-caption>
        <style>
        :host{
            display: flex;
            flex-direction: column;
            box-sizing: border-box;
            width: 1280px;
            height: 720px;
            padding: 0 2px;
            overflow: hidden;
            background: #000;
        }
        :host>*, .ribbon{ flex: none; }
        .ribbon{ height: 118px; background: #f1f2f0; overflow: hidden; }
        .sheet{ display: flex; height: 441px; }
        </style>`
    }
}
customElements.define('excel-app', ExcelApp);
</script>
</body>
</html>
